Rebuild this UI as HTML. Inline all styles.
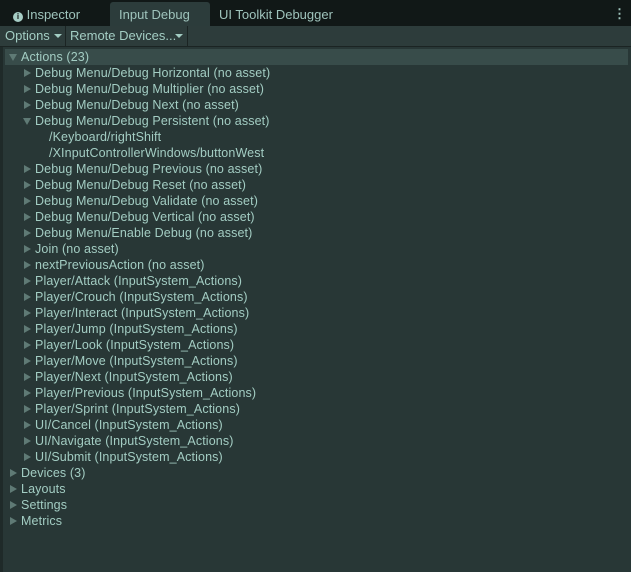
<!DOCTYPE html><html><head><style>
body{margin:0;width:631px;height:572px;background:#283736;font-family:"Liberation Sans",sans-serif;font-size:12.5px;letter-spacing:0.12px;color:#a3cdc3;overflow:hidden;position:relative}
.tabs{position:absolute;left:0;top:0;width:631px;height:26px;background:#111817}
.tab{position:absolute;top:0;height:26px;line-height:30px;color:#9fc4bc;font-size:13px;letter-spacing:0}
.act{background:#2c3c3b;border-radius:3px 3px 0 0;top:2px;height:24px;line-height:26px}
.tb{position:absolute;top:26px;left:0;width:631px;height:20px;background:#2d3c3b;border-bottom:1px solid #1b2423}
.btn{position:absolute;top:0;height:20px;line-height:20px;border-right:1px solid #1b2423;color:#a3cdc3;font-size:13px;letter-spacing:0}
.dd{position:absolute;top:8px;width:0;height:0;border-left:4px solid transparent;border-right:4px solid transparent;border-top:4px solid #a3cdc3}
.r{position:absolute;height:16px;line-height:18px;white-space:nowrap}
.a{position:absolute;width:0;height:0;border-top:4px solid transparent;border-bottom:4px solid transparent;border-left:7px solid #5f7a75;top:5px}
.d{position:absolute;width:0;height:0;border-left:4px solid transparent;border-right:4px solid transparent;border-top:7px solid #5f7a75;top:6px}
</style></head><body>
<div style="position:absolute;left:0;top:46px;width:3px;height:526px;background:#1f2a29"></div>
<div class="tabs">
<div class="tab" style="left:13px"><span style="display:inline-block;width:10px;height:10px;border-radius:50%;background:#a6cdc5;color:#111817;font-size:8px;line-height:10px;text-align:center;font-weight:bold;vertical-align:0px">i</span> Inspector</div>
<div class="tab act" style="left:110px;width:100px;padding-left:9px;box-sizing:border-box">Input Debug</div>
<div class="tab" style="left:219px">UI Toolkit Debugger</div>
<div class="tab" style="left:613px;font-weight:bold;line-height:28px">⋮</div>
</div>
<div class="tb">
<div class="btn" style="left:0;width:65px"><span style="position:absolute;left:5px">Options</span><div class="dd" style="left:54px"></div></div>
<div class="btn" style="left:66px;width:121px"><span style="position:absolute;left:4px">Remote Devices...</span><div class="dd" style="left:109px"></div></div>
</div>
<div style="position:absolute;left:5px;top:49px;width:623px;height:16px;background:#384c4a"></div>
<div id="t"></div>
<script>
var rows=[[0,'d','Actions (23)'],
[1,'a','Debug Menu/Debug Horizontal (no asset)'],[1,'a','Debug Menu/Debug Multiplier (no asset)'],[1,'a','Debug Menu/Debug Next (no asset)'],[1,'d','Debug Menu/Debug Persistent (no asset)'],[2,'','/Keyboard/rightShift'],[2,'','/XInputControllerWindows/buttonWest'],[1,'a','Debug Menu/Debug Previous (no asset)'],[1,'a','Debug Menu/Debug Reset (no asset)'],[1,'a','Debug Menu/Debug Validate (no asset)'],[1,'a','Debug Menu/Debug Vertical (no asset)'],[1,'a','Debug Menu/Enable Debug (no asset)'],[1,'a','Join (no asset)'],[1,'a','nextPreviousAction (no asset)'],[1,'a','Player/Attack (InputSystem_Actions)'],[1,'a','Player/Crouch (InputSystem_Actions)'],[1,'a','Player/Interact (InputSystem_Actions)'],[1,'a','Player/Jump (InputSystem_Actions)'],[1,'a','Player/Look (InputSystem_Actions)'],[1,'a','Player/Move (InputSystem_Actions)'],[1,'a','Player/Next (InputSystem_Actions)'],[1,'a','Player/Previous (InputSystem_Actions)'],[1,'a','Player/Sprint (InputSystem_Actions)'],[1,'a','UI/Cancel (InputSystem_Actions)'],[1,'a','UI/Navigate (InputSystem_Actions)'],[1,'a','UI/Submit (InputSystem_Actions)'],[0,'a','Devices (3)'],[0,'a','Layouts'],[0,'a','Settings'],[0,'a','Metrics']];
var h='';rows.forEach(function(r,i){var y=48+i*16,tx=[21,35,49][r[0]],ax=tx-11;
h+='<div class="r" style="top:'+y+'px;left:0;width:631px">'+(r[1]?'<div class="'+r[1]+'" style="left:'+(ax+(r[1]=='d'?-1:0))+'px"></div>':'')+'<span style="position:absolute;left:'+tx+'px">'+r[2]+'</span></div>';});
document.getElementById('t').innerHTML=h;
</script>
</body></html>
